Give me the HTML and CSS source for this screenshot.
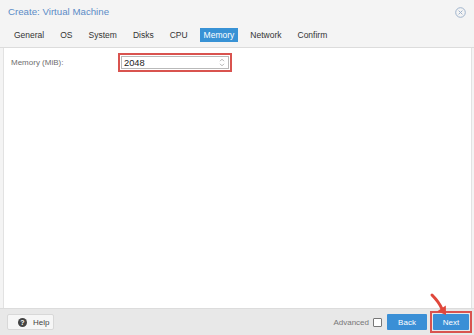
FILE: index.html
```html
<!DOCTYPE html>
<html>
<head>
<meta charset="utf-8">
<link rel="stylesheet" href="styles.css">
</head>
<body>
<div class="window">
  <div class="titlebar">
    <span class="title">Create: Virtual Machine</span>
    <svg class="close" width="11" height="11" viewBox="0 0 11 11"><circle cx="5.5" cy="5.5" r="4.8" fill="none" stroke="#9fb3cc" stroke-width="1"/><path d="M3.6 3.6 L7.4 7.4 M7.4 3.6 L3.6 7.4" stroke="#9fb3cc" stroke-width="1"/></svg>
  </div>
  <div class="tabs">
    <span class="tab">General</span>
    <span class="tab">OS</span>
    <span class="tab">System</span>
    <span class="tab">Disks</span>
    <span class="tab">CPU</span>
    <span class="tab active">Memory</span>
    <span class="tab">Network</span>
    <span class="tab">Confirm</span>
  </div>
  <div class="content">
    <div class="field">
      <span class="label">Memory (MiB):</span>
      <div class="highlight">
        <div class="input">
          <span>2048</span>
          <svg class="spin" width="6" height="9" viewBox="0 0 6 9"><path d="M1 3.2 L3 1.2 L5 3.2 M1 5.8 L3 7.8 L5 5.8" fill="none" stroke="#aaa" stroke-width="0.9"/></svg>
        </div>
      </div>
    </div>
  </div>
  <div class="footer">
    <button class="help"><svg width="9" height="9" viewBox="0 0 9 9"><circle cx="4.5" cy="4.5" r="4.5" fill="#444"/><text x="4.5" y="7" text-anchor="middle" font-size="7" font-weight="bold" fill="#fff" font-family="Liberation Sans, sans-serif">?</text></svg>Help</button>
    <div class="spacer"></div>
    <label class="adv">Advanced <span class="check"></span></label>
    <button class="btn back">Back</button>
    <div class="next-wrap"><button class="btn next">Next</button></div>
  </div>
  <svg class="arrow" width="30" height="30" viewBox="0 0 30 30">
    <path d="M4 5 C 8 9, 11 12, 14 19" fill="none" stroke="#e0473b" stroke-width="3" stroke-linecap="round"/>
    <path d="M18 25 L17.8 15.6 L9.4 21.2 Z" fill="#e0473b"/>
  </svg>
</div>
</body>
</html>
```
FILE: styles.css
```css
* { box-sizing: border-box; }
html, body { margin: 0; padding: 0; }
body {
  width: 474px;
  height: 335px;
  background: #f4f4f4;
  font-family: "Liberation Sans", Arial, sans-serif;
  overflow: hidden;
}
.window {
  position: relative;
  display: flex;
  flex-direction: column;
  height: 335px;
}
.titlebar {
  height: 23px;
  display: flex;
  align-items: center;
  justify-content: space-between;
  padding: 0 8px 0 8px;
}
.title {
  font-size: 9.7px;
  color: #5c8cc7;
}
.close { margin-top: 1px; }
.tabs {
  height: 25px;
  display: flex;
  align-items: center;
  gap: 8px;
  padding-left: 10px;
  border-bottom: 1px solid #dcdcdc;
}
.tab {
  font-size: 8.5px;
  color: #333;
  padding: 3px 4px;
  line-height: 8px;
}
.tab.active {
  background: #3892d5;
  color: #fff;
  padding: 3px 4px 3px 4px;
}
.content {
  flex: 1;
  background: #fff;
  margin: 0 2px 0 3px;
  border-left: 1px solid #e2e2e2;
  border-right: 1px solid #e2e2e2;
  padding: 5px 0 0 7px;
}
.field {
  display: flex;
  align-items: center;
}
.label {
  width: 107px;
  font-size: 8px;
  color: #6e6e6e;
}
.highlight {
  border: 2px solid #d9534f;
  width: 114px;
  padding: 1px;
}
.input {
  height: 13px;
  border: 1px solid #b9b9b9;
  display: flex;
  align-items: center;
  justify-content: space-between;
  padding: 0 3px 0 2px;
  font-size: 9.3px;
  color: #222;
}
.spin { display: block; }
.footer {
  height: 27px;
  background: #e8e8e8;
  border-top: 1px solid #dcdcdc;
  display: flex;
  align-items: center;
  padding: 0 2px 0 7px;
}
.help {
  height: 16px;
  width: 47px;
  display: flex;
  align-items: center;
  gap: 6px;
  padding: 0 0 0 10px;
  background: #f6f6f6;
  border: 1px solid #d8d8d8;
  border-radius: 2px;
  font-family: "Liberation Sans", Arial, sans-serif;
  font-size: 8px;
  color: #444;
}
.spacer { flex: 1; }
.adv {
  display: flex;
  align-items: center;
  gap: 4px;
  font-size: 8px;
  color: #777;
  margin-right: 5px;
}
.check {
  width: 9px;
  height: 9px;
  border: 1px solid #777;
  background: #fff;
  border-radius: 1px;
}
.btn {
  height: 16px;
  border: none;
  background: #3a8fd6;
  color: #fff;
  font-family: "Liberation Sans", Arial, sans-serif;
  font-size: 8px;
  border-radius: 1px;
  padding: 0;
}
.back { width: 40px; margin-right: 3px; }
.next-wrap {
  border: 2px solid #d9534f;
  padding: 1px;
  background: #e8e8e8;
}
.next { width: 36px; display: block; }
.arrow {
  position: absolute;
  left: 428px;
  top: 290px;
}
```
